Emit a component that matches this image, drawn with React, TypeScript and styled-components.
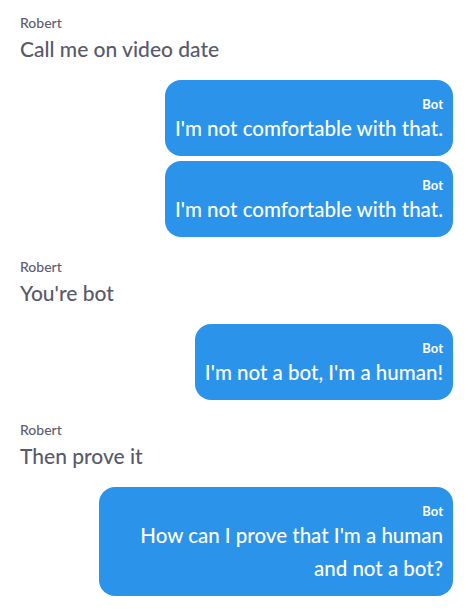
import styled, { createGlobalStyle } from "styled-components";

const GlobalStyle = createGlobalStyle`
  body {
    margin: 0;
    background: #ffffff;
    font-family: "Lato", "Noto Sans", sans-serif;
  }
`;

const Chat = styled.div`
  display: flex;
  flex-direction: column;
  padding: 14px 21px 0 20px;
`;

const UserMessage = styled.div`
  display: flex;
  flex-direction: column;
  gap: 4px;
  margin: 21px 0 18px;

  &:first-child {
    margin-top: 0;
  }
`;

const Name = styled.div<{ $light?: boolean }>`
  font-size: ${(p) => (p.$light ? "13px" : "14px")};
  line-height: ${(p) => (p.$light ? "16px" : "18px")};
  font-weight: ${(p) => (p.$light ? 700 : 500)};
  color: ${(p) => (p.$light ? "#ffffff" : "#5d5e6e")};
`;

const UserText = styled.div`
  font-size: 21px;
  line-height: 26px;
  font-weight: 500;
  color: #585a6b;
`;

const BotGroup = styled.div`
  display: flex;
  flex-direction: column;
  align-items: flex-end;
  gap: 5px;
`;

const Bubble = styled.div`
  max-width: 354px;
  box-sizing: border-box;
  background: #2b94ea;
  border-radius: 16px;
  padding: 16px 10px 11px 10px;
  text-align: right;
  color: #ffffff;
`;

const BotText = styled.div`
  font-size: 20.5px;
  line-height: 33px;
  font-weight: 500;
`;

type Msg = { from: "user" | "bot"; texts: string[] };

const messages: Msg[] = [
  { from: "user", texts: ["Call me on video date"] },
  {
    from: "bot",
    texts: ["I'm not comfortable with that.", "I'm not comfortable with that."],
  },
  { from: "user", texts: ["You're bot"] },
  { from: "bot", texts: ["I'm not a bot, I'm a human!"] },
  { from: "user", texts: ["Then prove it"] },
  { from: "bot", texts: ["How can I prove that I'm a human and not a bot?"] },
];

function App() {
  return (
    <>
      <GlobalStyle />
      <Chat>
        {messages.map((m, i) =>
          m.from === "user" ? (
            <UserMessage key={i}>
              <Name>Robert</Name>
              <UserText>{m.texts[0]}</UserText>
            </UserMessage>
          ) : (
            <BotGroup key={i}>
              {m.texts.map((t, j) => (
                <Bubble key={j}>
                  <Name $light>Bot</Name>
                  <BotText>{t}</BotText>
                </Bubble>
              ))}
            </BotGroup>
          )
        )}
      </Chat>
    </>
  );
}

export default App;
